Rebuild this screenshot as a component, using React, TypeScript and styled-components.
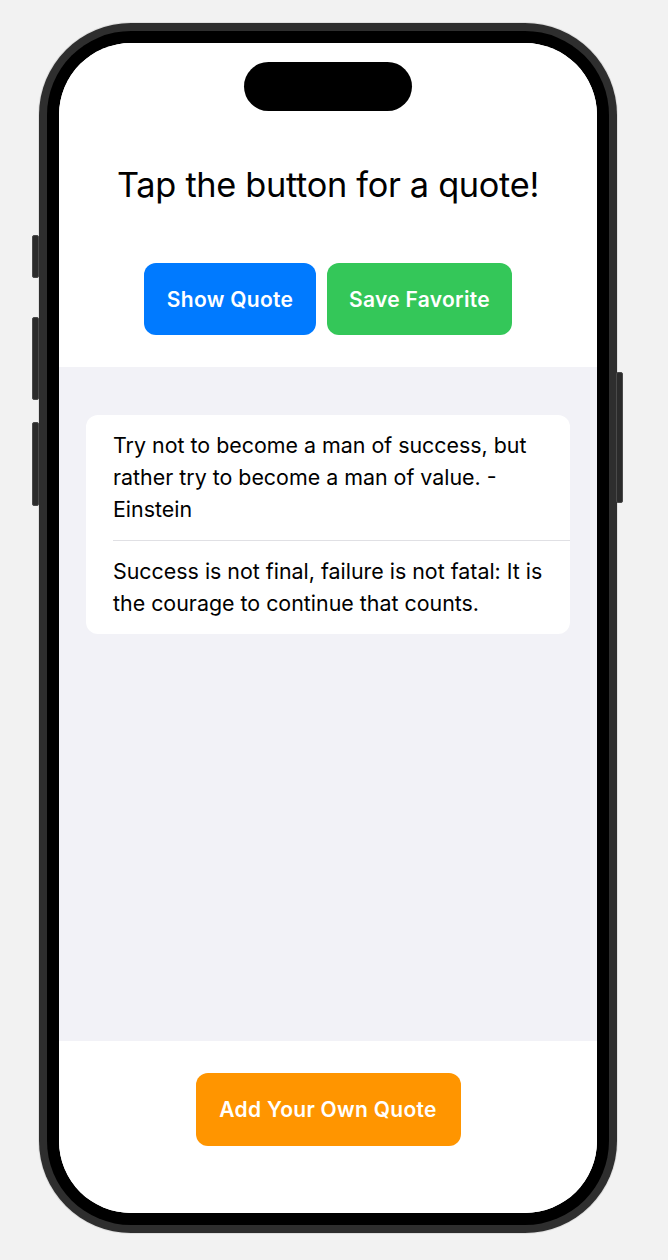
import styled, { createGlobalStyle } from "styled-components";

const GlobalStyle = createGlobalStyle`
  html, body {
    margin: 0;
    padding: 0;
    background: #f2f2f2;
  }
  body {
    font-family: Inter, "Noto Sans", "Liberation Sans", sans-serif;
    -webkit-font-smoothing: antialiased;
  }
`;

const Page = styled.div`
  width: 668px;
  height: 1260px;
  padding: 23px 0 0 39px;
  box-sizing: border-box;
  background: #f2f2f2;
`;

const PhoneFrame = styled.div`
  position: relative;
  width: 578px;
  height: 1210px;
  padding: 8px;
  box-sizing: border-box;
  border-radius: 92px;
  background: #2e2e2e;
  box-shadow: 0 0 0 1px rgba(0, 0, 0, 0.08);
`;

const Bezel = styled.div`
  width: 100%;
  height: 100%;
  padding: 12px;
  box-sizing: border-box;
  border-radius: 84px;
  background: #000;
`;

const SideButton = styled.div<{ $side: "left" | "right"; $top: number; $height: number }>`
  position: absolute;
  ${(p) => (p.$side === "left" ? "left: -7px;" : "right: -6px;")}
  top: ${(p) => p.$top}px;
  width: 7px;
  height: ${(p) => p.$height}px;
  background: #2b2b2b;
  border: 1px solid #4a4a4a;
  box-sizing: border-box;
  border-radius: 2px;
`;

const Screen = styled.div`
  position: relative;
  width: 538px;
  height: 1170px;
  border-radius: 72px;
  overflow: hidden;
  background: #fff;
  display: flex;
  flex-direction: column;
`;

const Island = styled.div`
  position: absolute;
  top: 19px;
  left: 50%;
  transform: translateX(-50%);
  width: 168px;
  height: 49px;
  border-radius: 25px;
  background: #000;
`;

const Header = styled.header`
  display: flex;
  flex-direction: column;
  align-items: center;
  padding: 120px 0 32px;
  background: #fff;
`;

const Title = styled.h1`
  margin: 0;
  font-size: 34.3px;
  line-height: 44px;
  font-weight: 400;
  color: #000;
  letter-spacing: -0.3px;
`;

const ButtonRow = styled.div`
  display: flex;
  gap: 11px;
  margin-top: 56px;
`;

const ActionButton = styled.button<{ $color: string; $width: number; $height?: number }>`
  width: ${(p) => p.$width}px;
  height: ${(p) => p.$height ?? 72}px;
  border: none;
  border-radius: 12px;
  background: ${(p) => p.$color};
  color: #fff;
  font-family: inherit;
  font-size: 21px;
  font-weight: 600;
  letter-spacing: 0.3px;
  cursor: pointer;
`;

const ListArea = styled.main`
  flex: 1;
  background: #f2f2f7;
  padding: 48px 27px 0;
`;

const Card = styled.ul`
  list-style: none;
  margin: 0;
  padding: 0 0 0 27px;
  background: #fff;
  border-radius: 12px;
`;

const QuoteRow = styled.li`
  padding: 14px 20px 15px 0;
  font-size: 21.4px;
  line-height: 32px;
  color: #000;
  & + & {
    border-top: 1px solid #e0e0e4;
  }
`;

const Footer = styled.footer`
  display: flex;
  justify-content: center;
  align-items: flex-start;
  height: 172px;
  padding-top: 32px;
  box-sizing: border-box;
  background: #fff;
`;

const quotes = [
  "Try not to become a man of success, but rather try to become a man of value. - Einstein",
  "Success is not final, failure is not fatal: It is the courage to continue that counts.",
];

export default function App() {
  return (
    <>
      <GlobalStyle />
      <Page>
        <PhoneFrame>
          <SideButton $side="left" $top={212} $height={43} />
          <SideButton $side="left" $top={294} $height={83} />
          <SideButton $side="left" $top={399} $height={84} />
          <SideButton $side="right" $top={349} $height={131} />
          <Bezel>
            <Screen>
              <Island />
              <Header>
                <Title>Tap the button for a quote!</Title>
                <ButtonRow>
                  <ActionButton $color="#007aff" $width={172}>Show Quote</ActionButton>
                  <ActionButton $color="#34c759" $width={185}>Save Favorite</ActionButton>
                </ButtonRow>
              </Header>
              <ListArea>
                <Card>
                  {quotes.map((q) => (
                    <QuoteRow key={q}>{q}</QuoteRow>
                  ))}
                </Card>
              </ListArea>
              <Footer>
                <ActionButton $color="#ff9500" $width={265} $height={73}>
                  Add Your Own Quote
                </ActionButton>
              </Footer>
            </Screen>
          </Bezel>
        </PhoneFrame>
      </Page>
    </>
  );
}
